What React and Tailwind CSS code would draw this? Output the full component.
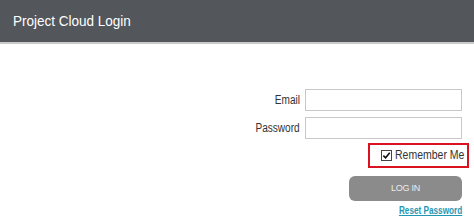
import React from 'react';

const App = () => {
  return (
    <div className="w-[474px] h-[219px] bg-white overflow-hidden" style={{ fontFamily: '"Liberation Sans", Arial, sans-serif' }}>
      {/* Header */}
      <div className="h-[44px] bg-[#53565b] border-b-2 border-[#c9c9c9] flex items-center pl-[13px]">
        <span className="inline-block text-white text-[15px] leading-none mt-[-1px] scale-x-[0.9] origin-left whitespace-nowrap">Project Cloud Login</span>
      </div>

      {/* Form */}
      <div className="flex flex-col items-end pr-[12px] pt-[45px]">
        <div className="flex items-center gap-[5px]">
          <label className="inline-block text-[12px] text-[#333] scale-x-[0.84] origin-right">Email</label>
          <input className="w-[157px] h-[22px] border border-[#c8c8c8] bg-white outline-none" />
        </div>
        <div className="flex items-center gap-[5px] mt-[6px]">
          <label className="inline-block text-[12px] text-[#333] scale-x-[0.84] origin-right">Password</label>
          <input type="password" className="w-[157px] h-[22px] border border-[#c8c8c8] bg-white outline-none" />
        </div>

        {/* Remember me, highlighted */}
        <div className="mt-[4px] -mr-[7px] w-[101px] h-[25px] border-2 border-[#d9121f] flex items-center pl-[11px] gap-[3px] whitespace-nowrap">
          <span className="shrink-0 w-[11px] h-[11px] border border-[#444] bg-white flex items-center justify-center">
            <svg viewBox="0 0 10 10" className="w-[9px] h-[9px]">
              <path d="M1.5 5.2 L4 7.6 L8.6 2" fill="none" stroke="#111" strokeWidth="1.8" />
            </svg>
          </span>
          <span className="inline-block text-[12.5px] text-[#333] scale-x-[0.84] origin-left">Remember Me</span>
        </div>

        <button className="mt-[8px] w-[113px] h-[25px] rounded-[6px] bg-[#8b8b8b] text-[#ececec] text-[9px] tracking-tight">
          LOG IN
        </button>

        <a href="#" className="mt-[5px] inline-block text-[10px] font-bold text-[#1f97b3] underline leading-none scale-x-[0.82] origin-right whitespace-nowrap">Reset Password</a>
      </div>
    </div>
  );
};

export default App;
